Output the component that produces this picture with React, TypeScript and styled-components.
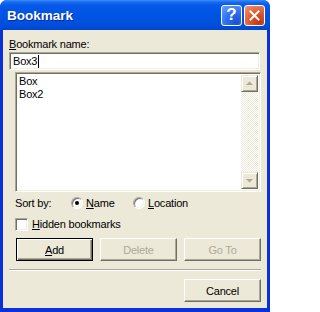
import React from 'react';
import styled, { createGlobalStyle, css } from 'styled-components';

const GlobalStyle = createGlobalStyle`
  html, body {
    margin: 0;
    padding: 0;
    background: #ffffff;
  }
  body {
    font-family: 'Liberation Sans', Arial, sans-serif;
    font-size: 11px;
  }
`;

const Window = styled.div`
  width: 270px;
  height: 312px;
  display: flex;
  flex-direction: column;
  background: #0831d9;
  border-radius: 7px 7px 0 0;
  overflow: hidden;
  box-sizing: border-box;
`;

const TitleBar = styled.div`
  height: 30px;
  flex: none;
  display: flex;
  align-items: center;
  padding: 0 5px 0 7px;
  background: linear-gradient(
    to bottom,
    #3c8cfc 0%,
    #1568f0 8%,
    #0558e8 20%,
    #0054e3 50%,
    #0050de 80%,
    #0046cf 100%
  );
  box-sizing: border-box;
`;

const Title = styled.div`
  flex: 1;
  color: #ffffff;
  font-family: 'Liberation Sans', Arial, sans-serif;
  font-weight: bold;
  font-size: 13.5px;
  text-shadow: 1px 1px 0 #0a2a9c;
  padding-top: 1px;
`;

const CaptionButton = styled.div<{ $kind: 'help' | 'close' }>`
  width: 21px;
  height: 21px;
  box-sizing: border-box;
  border: 1px solid #ffffff;
  border-radius: 3px;
  display: flex;
  align-items: center;
  justify-content: center;
  color: #ffffff;
  font-family: 'Liberation Sans', Arial, sans-serif;
  font-weight: bold;
  font-size: 17px;
  margin-left: 2px;
  ${(p) =>
    p.$kind === 'help'
      ? css`
          background: radial-gradient(circle at 75% 85%, #1a52d8 0%, #2c6cf0 45%, #6aa6ff 100%);
        `
      : css`
          background: radial-gradient(circle at 75% 85%, #c03812 0%, #e0582c 45%, #f2967a 100%);
        `}
`;

const Body = styled.div`
  flex: 1;
  margin: 0 3px 4px 3px;
  background: #ece9d8;
  display: flex;
  flex-direction: column;
  padding: 8px 6px 0 6px;
  box-sizing: border-box;
  color: #000000;
  font-family: 'Liberation Sans', Arial, sans-serif;
  font-size: 11px;
  letter-spacing: -0.2px;
`;

const Label = styled.div`
  height: 13px;
  line-height: 13px;
`;

const sunken = css`
  box-sizing: border-box;
  border-style: solid;
  border-width: 1px;
  border-color: #aca899 #ffffff #ffffff #aca899;
  box-shadow: inset 1px 1px 0 #716f64, inset -1px -1px 0 #f1efe2;
`;

const TextInput = styled.div`
  ${sunken};
  margin-top: 1px;
  margin-right: 1px;
  height: 18px;
  background: #ffffff;
  display: flex;
  align-items: center;
  padding-left: 3px;
  line-height: 14px;
`;

const Caret = styled.span`
  display: inline-block;
  width: 1px;
  height: 13px;
  background: #000000;
  margin-left: 1px;
`;

const ListBox = styled.div`
  ${sunken};
  margin: 2px 0 0 6px;
  height: 120px;
  background: #ffffff;
  display: flex;
  padding: 2px;
`;

const Items = styled.div`
  flex: 1;
  padding-left: 1px;
`;

const Item = styled.div`
  height: 13px;
  line-height: 13px;
`;

const ScrollBar = styled.div`
  width: 17px;
  display: flex;
  flex-direction: column;
  justify-content: space-between;
  background: repeating-conic-gradient(#ffffff 0 25%, #ece9d8 0 50%) 0 0 / 2px 2px;
`;

const ScrollButton = styled.div`
  width: 17px;
  height: 17px;
  box-sizing: border-box;
  background: #ece9d8;
  border-style: solid;
  border-width: 1px;
  border-color: #ece9d8 #716f64 #716f64 #ece9d8;
  box-shadow: inset 1px 1px 0 #ffffff, inset -1px -1px 0 #aca899;
  display: flex;
  align-items: center;
  justify-content: center;
`;

const OptionRow = styled.div<{ $top: number }>`
  display: flex;
  align-items: center;
  height: 14px;
  margin-top: ${(p) => p.$top}px;
  padding-left: 6px;
`;

const SortLabel = styled.span`
  width: 56px;
`;

const RadioOption = styled.label`
  display: flex;
  align-items: center;
  width: 62px;
`;

const RadioCircle = styled.span<{ $checked?: boolean }>`
  width: 12px;
  height: 12px;
  box-sizing: border-box;
  border-radius: 50%;
  background: #ffffff;
  border: 1px solid;
  border-color: #aca899 #ffffff #ffffff #aca899;
  box-shadow: inset 1px 1px 0 #716f64, inset -1px -1px 0 #f1efe2;
  margin-right: 3px;
  display: flex;
  align-items: center;
  justify-content: center;
  &::after {
    content: '';
    width: 4px;
    height: 4px;
    border-radius: 50%;
    background: ${(p) => (p.$checked ? '#000000' : 'transparent')};
  }
`;

const CheckBox = styled.span`
  ${sunken};
  width: 13px;
  height: 13px;
  background: #ffffff;
  margin-right: 4px;
`;

const ButtonRow = styled.div<{ $top: number }>`
  display: flex;
  justify-content: flex-end;
  gap: 7px;
  margin-top: ${(p) => p.$top}px;
  padding-left: 7px;
`;

const Button = styled.div<{ $default?: boolean; $disabled?: boolean }>`
  width: 77px;
  height: 23px;
  box-sizing: border-box;
  background: #ece9d8;
  display: flex;
  align-items: center;
  justify-content: center;
  color: ${(p) => (p.$disabled ? '#aca899' : '#000000')};
  border-style: solid;
  border-width: 1px;
  ${(p) =>
    p.$default
      ? css`
          border-color: #000000;
          box-shadow: inset 1px 1px 0 #ffffff, inset -1px -1px 0 #716f64, inset -2px -2px 0 #aca899;
        `
      : css`
          border-color: #ffffff #716f64 #716f64 #ffffff;
          box-shadow: inset -1px -1px 0 #aca899;
        `}
`;

const Separator = styled.div`
  margin-top: 8px;
  height: 0;
  border-top: 1px solid #aca899;
  border-bottom: 1px solid #ffffff;
`;

const Arrow = ({ down }: { down?: boolean }) => (
  <svg width="7" height="5" viewBox="0 0 7 5">
    <polygon points={down ? '0,1 7,1 3.5,4.5' : '0,4 7,4 3.5,0.5'} fill="#aca899" />
  </svg>
);

const CloseGlyph = () => (
  <svg width="11" height="11" viewBox="0 0 11 11">
    <path d="M1.5 1.5 L9.5 9.5 M9.5 1.5 L1.5 9.5" stroke="#ffffff" strokeWidth="2" strokeLinecap="square" />
  </svg>
);

const App = () => (
  <>
    <GlobalStyle />
    <Window>
      <TitleBar>
        <Title>Bookmark</Title>
        <CaptionButton $kind="help">?</CaptionButton>
        <CaptionButton $kind="close">
          <CloseGlyph />
        </CaptionButton>
      </TitleBar>
      <Body>
        <Label>
          <u>B</u>ookmark name:
        </Label>
        <TextInput>
          Box3
          <Caret />
        </TextInput>
        <ListBox>
          <Items>
            <Item>Box</Item>
            <Item>Box2</Item>
          </Items>
          <ScrollBar>
            <ScrollButton>
              <Arrow />
            </ScrollButton>
            <ScrollButton>
              <Arrow down />
            </ScrollButton>
          </ScrollBar>
        </ListBox>
        <OptionRow $top={4}>
          <SortLabel>Sort by:</SortLabel>
          <RadioOption>
            <RadioCircle $checked />
            <span>
              <u>N</u>ame
            </span>
          </RadioOption>
          <RadioOption>
            <RadioCircle />
            <span>
              <u>L</u>ocation
            </span>
          </RadioOption>
        </OptionRow>
        <OptionRow $top={7}>
          <CheckBox />
          <span>
            <u>H</u>idden bookmarks
          </span>
        </OptionRow>
        <ButtonRow $top={7}>
          <Button $default>
            <span>
              <u>A</u>dd
            </span>
          </Button>
          <Button $disabled>Delete</Button>
          <Button $disabled>Go To</Button>
        </ButtonRow>
        <Separator />
        <ButtonRow $top={8}>
          <Button>Cancel</Button>
        </ButtonRow>
      </Body>
    </Window>
  </>
);

export default App;
